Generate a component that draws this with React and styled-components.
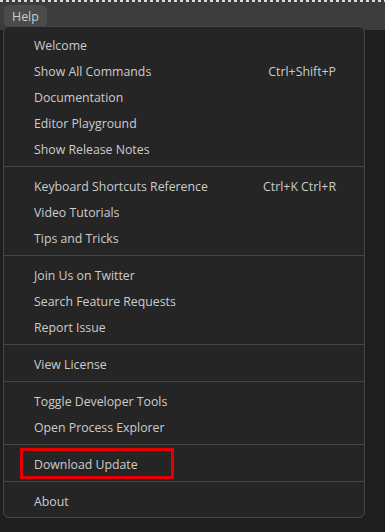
import React from "react";
import styled, { createGlobalStyle } from "styled-components";

const Global = createGlobalStyle`
  html, body { margin: 0; padding: 0; background: #1e1e1e; }
  body { font-family: "Segoe UI", "Open Sans", "Noto Sans", sans-serif; }
  #root { width: 385px; height: 532px; }
`;

const Page = styled.div`
  position: relative;
  width: 385px;
  height: 532px;
  background: #1e1e1e;
  overflow: hidden;
`;

const TitleBar = styled.div`
  height: 30px;
  background: #3c3c3c;
  display: flex;
  align-items: flex-start;
  padding: 5px 0 0 4px;
  box-sizing: border-box;
  background-image: repeating-linear-gradient(
    90deg,
    #d8d8d8 0 3px,
    transparent 3px 6px
  );
  background-size: 100% 2px;
  background-repeat: no-repeat;
  background-color: #3c3c3c;
`;

const MenuButton = styled.div`
  height: 22px;
  padding: 0 8px;
  border-radius: 5px;
  background: #4a4b4b;
  color: #cccccc;
  font-size: 12.4px;
  line-height: 23px;
`;

const Menu = styled.div`
  position: absolute;
  left: 3px;
  top: 26px;
  width: 362px;
  box-sizing: border-box;
  background: #252526;
  border: 1px solid #454545;
  border-radius: 6px;
  padding: 5px 0 3px;
  color: #cccccc;
  font-size: 12.3px;
`;

const Row = styled.div`
  position: relative;
  height: 26px;
  display: flex;
  align-items: center;
  justify-content: space-between;
  padding: 0 28px 0 30px;
`;

const Label = styled.span`
  white-space: nowrap;
`;

const Shortcut = styled.span`
  white-space: nowrap;
`;

const Separator = styled.div`
  height: 1px;
  background: #454545;
  margin: 4px 0 6px;
`;

const Highlight = styled.div`
  position: absolute;
  left: 16px;
  top: -3px;
  width: 154px;
  height: 31px;
  box-sizing: border-box;
  border: 3px solid #e30000;
  pointer-events: none;
`;

const groups = [
  [
    ["Welcome"],
    ["Show All Commands", "Ctrl+Shift+P"],
    ["Documentation"],
    ["Editor Playground"],
    ["Show Release Notes"],
  ],
  [
    ["Keyboard Shortcuts Reference", "Ctrl+K Ctrl+R"],
    ["Video Tutorials"],
    ["Tips and Tricks"],
  ],
  [["Join Us on Twitter"], ["Search Feature Requests"], ["Report Issue"]],
  [["View License"]],
  [["Toggle Developer Tools"], ["Open Process Explorer"]],
  [["Download Update", null, true]],
  [["About"]],
];

export default function App() {
  return (
    <Page>
      <Global />
      <TitleBar>
        <MenuButton>Help</MenuButton>
      </TitleBar>
      <Menu>
        {groups.map((g, gi) => (
          <React.Fragment key={gi}>
            {gi > 0 && <Separator />}
            {g.map(([label, sc, hl]) => (
              <Row key={label}>
                <Label>{label}</Label>
                {sc && <Shortcut>{sc}</Shortcut>}
                {hl && <Highlight />}
              </Row>
            ))}
          </React.Fragment>
        ))}
      </Menu>
    </Page>
  );
}
